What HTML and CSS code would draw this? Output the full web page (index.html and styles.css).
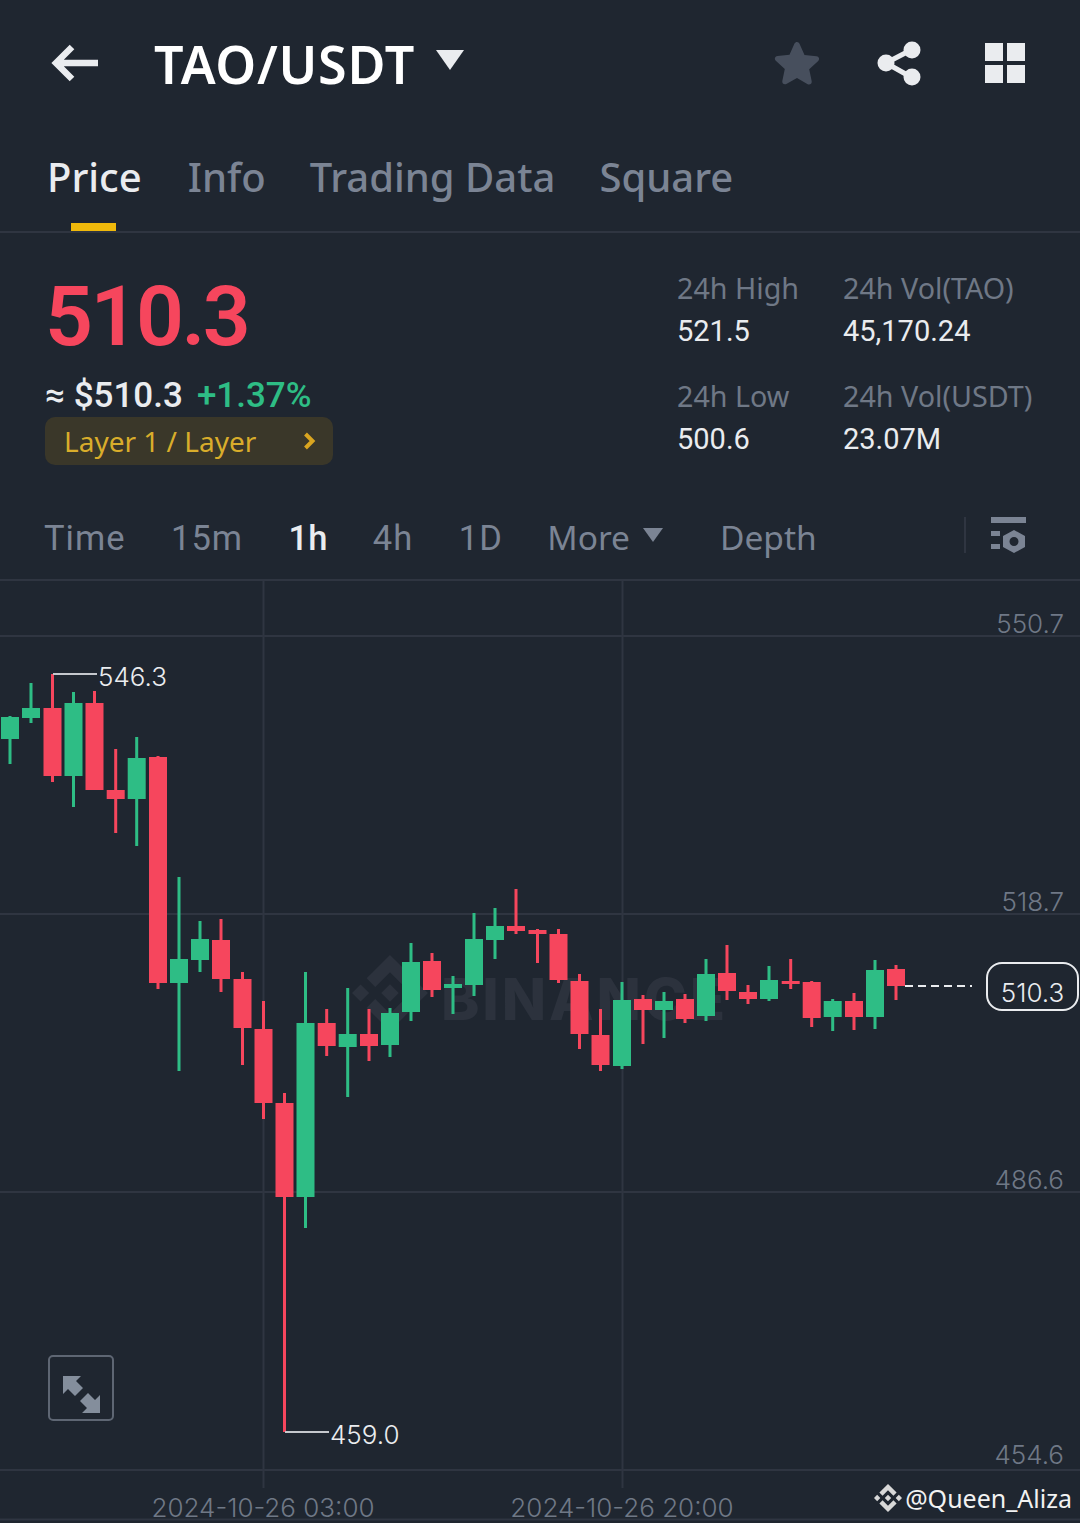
FILE: index.html
```html
<!DOCTYPE html>
<html lang="en">
<head>
  <meta charset="UTF-8" />
  <title>TAO/USDT</title>
  <link rel="stylesheet" href="styles.css">
</head>
<body>
  <header class="topbar">
    <svg class="back-icon" viewBox="0 0 50 40" width="50" height="40"><path d="M48 20H7M22 4 6 20l16 16"/></svg>
    <h1 class="pair">TAO/USDT</h1>
    <span class="caret caret-title"></span>
    <div class="topbar-actions">
      <svg class="star-icon" viewBox="0 0 46 46" width="46" height="46"><path d="M23 2c1 0 2 .7 2.500 1.800l5 11.200 12 1.300c2.500.3 3.500 3 1.700 4.700l-9 8.200 2.500 12c.5 2.500-2 4-4 3L23 38l-10.700 6c-2 1-4.500-.5-4-3l2.500-12-9-8.200c-1.800-1.700-.8-4.400 1.700-4.700l12-1.300 5-11.200C21 2.700 22 2 23 2z"/></svg>
      <svg class="share-icon" viewBox="0 0 44 46" width="44" height="46"><path d="M9 23 34 10M9 23l25 14"/><circle cx="9" cy="23" r="8.500"/><circle cx="35" cy="10" r="8.500"/><circle cx="35" cy="37" r="8.500"/></svg>
      <svg class="grid-icon" viewBox="0 0 40 40" width="40" height="40"><rect width="18" height="18"/><rect x="22" width="18" height="18"/><rect y="22" width="18" height="18"/><rect x="22" y="22" width="18" height="18"/></svg>
    </div>
  </header>

  <nav class="tabs">
    <a class="tab active">Price</a>
    <a class="tab">Info</a>
    <a class="tab">Trading Data</a>
    <a class="tab">Square</a>
  </nav>

  <section class="summary">
    <div class="summary-left">
      <div class="last-price">510.3</div>
      <div class="price-sub"><span class="fiat">≈ $510.3</span><span class="change">+1.37%</span></div>
      <div class="chip"><span>Layer 1 / Layer</span><svg viewBox="0 0 13 18" width="13" height="18"><path d="M2.500 2l7 7-7 7"/></svg></div>
    </div>
    <div class="stats">
      <div class="stat"><div class="stat-label">24h High</div><div class="stat-value">521.5</div></div>
      <div class="stat"><div class="stat-label">24h Vol(TAO)</div><div class="stat-value">45,170.24</div></div>
      <div class="stat"><div class="stat-label">24h Low</div><div class="stat-value">500.6</div></div>
      <div class="stat"><div class="stat-label">24h Vol(USDT)</div><div class="stat-value">23.07M</div></div>
    </div>
  </section>

  <div class="intervals">
    <span class="interval">Time</span>
    <span class="interval">15m</span>
    <span class="interval active">1h</span>
    <span class="interval">4h</span>
    <span class="interval">1D</span>
    <span class="interval more">More</span>
    <span class="caret caret-more"></span>
    <span class="interval depth">Depth</span>
    <span class="divider"></span>
    <svg class="settings-icon" viewBox="0 0 36 36" width="36" height="36"><path d="M1 0h35v6H1zM1 14h9v5H1zM1 27h9v5H1z"/><path fill-rule="evenodd" d="M24 13l11 6v11l-11 6-11-6V19zM24 20a4.500 4.500 0 1 0 0 9 4.500 4.500 0 0 0 0-9z"/></svg>
  </div>

  <main class="chart">
    <svg id="chart-svg" class="chart-svg" viewBox="0 581 1080 942" width="1080" height="942">
      <g class="grid">
        <path d="M0 636H1080M0 914H1080M0 1192H1080M0 1470H1080M0 1519.500H1080"/>
        <path d="M263.500 581V1488M622.500 581V1488"/>
      </g>
      <g class="watermark">
        <g transform="translate(352 955) scale(.6)">
          <path d="M38.730 53.200 63.310 28.620 87.900 53.210l14.300-14.300L63.310 0 24.420 38.900zM0 63.310 14.300 49l14.300 14.310-14.300 14.300zM38.730 73.410l24.580 24.580L87.900 73.400l14.310 14.290-38.900 38.920-38.890-38.900zM98 63.310 112.300 49l14.310 14.310-14.310 14.300zM77.820 63.300 63.310 48.790 48.800 63.310l14.510 14.500z"/>
        </g>
        <text x="441" y="1020" textLength="284">BINANCE</text>
      </g>
      <g id="candles"></g>
      <g class="axis-labels">
        <text x="1064" y="633">550.7</text>
        <text x="1064" y="911">518.7</text>
        <text x="1064" y="1189">486.6</text>
        <text x="1064" y="1464">454.6</text>
      </g>
      <g class="date-labels">
        <text x="263" y="1517">2024-10-26 03:00</text>
        <text x="622" y="1517">2024-10-26 20:00</text>
      </g>
      <path class="pin-line" d="M53 674H97M285 1432H329"/>
      <text class="pin-label" x="98" y="686">546.3</text>
      <text class="pin-label" x="330" y="1444">459.0</text>
      <path class="last-line" d="M905 986H972"/>
    </svg>

    <div class="price-tag">510.3</div>

    <button class="expand">
      <svg viewBox="0 0 38 38" width="38" height="38"><path d="M0 0h18l-5 5 7 7-8 8-7-7-5 5zM37 37H19l5-5-7-7 8-8 7 7 5-5z"/></svg>
    </button>

    <div class="credit">
      <svg viewBox="0 0 126.610 126.610" width="28" height="28"><path d="M38.730 53.200 63.310 28.620 87.900 53.210l14.300-14.300L63.310 0 24.420 38.900zM0 63.310 14.300 49l14.300 14.310-14.300 14.300zM38.730 73.410l24.580 24.580L87.900 73.400l14.310 14.290-38.900 38.920-38.890-38.900zM98 63.310 112.300 49l14.310 14.310-14.310 14.300zM77.820 63.300 63.310 48.790 48.800 63.310l14.510 14.500z"/></svg>
      <span>@Queen_Aliza</span>
    </div>
  </main>

  <script>
    // x, body top, body bottom, wick top, wick bottom, up?
    const candles = [
      [10, 717, 739, 716, 764, 1], [31, 708, 718, 683, 723, 1], [52.5, 708, 776, 674, 782, 0],
      [73.5, 703, 776, 692, 807, 1], [94.5, 703, 790, 691, 790, 0], [115.7, 790, 799, 749, 833, 0],
      [136.7, 758, 799, 737, 846, 1], [158, 757, 983, 756, 989, 0], [179, 959, 983, 877, 1071, 1],
      [200, 939, 960, 921, 972, 1], [221, 940, 979, 919, 992, 0], [242.5, 979, 1028, 972, 1065, 0],
      [263.5, 1029, 1103, 1001, 1119, 0], [284.5, 1103, 1197, 1093, 1432, 0], [305.5, 1023, 1197, 972, 1228, 1],
      [326.7, 1023, 1046, 1009, 1056, 0], [347.7, 1034, 1047, 988, 1097, 1], [369, 1034, 1046, 1009, 1061, 0],
      [390, 1013, 1045, 1008, 1057, 1], [411, 962, 1012, 943, 1021, 1], [432, 961, 990, 953, 997, 0],
      [453, 984, 988, 976, 1014, 1], [474, 939, 985, 913, 996, 1], [495, 926, 940, 908, 959, 1],
      [516, 926, 931, 889, 934, 0], [537.5, 930, 934, 929, 963, 0], [558.5, 934, 980, 929, 983, 0],
      [579.5, 981, 1034, 974, 1049, 0], [600.5, 1035, 1065, 1009, 1071, 0], [622, 1000, 1066, 982, 1069, 1],
      [643, 999, 1010, 995, 1044, 0], [664, 1001, 1010, 992, 1038, 1], [685, 999, 1019, 994, 1023, 0],
      [706, 974, 1016, 959, 1021, 1], [727, 973, 991, 945, 1000, 0], [748, 992, 999, 985, 1004, 0],
      [769, 980, 999, 966, 1001, 1], [790.7, 981, 984, 959, 989, 0], [811.7, 982, 1018, 981, 1027, 0],
      [832.7, 1001, 1017, 999, 1031, 1], [854, 1001, 1017, 993, 1030, 0], [875, 970, 1017, 960, 1029, 1],
      [896, 969, 986, 965, 1000, 0]
    ];

    const holder = document.getElementById('candles');
    holder.innerHTML = candles.map(([x, top, bottom, high, low, up]) => {
      const cls = up ? 'up' : 'down';
      return `<g class="${cls}"><rect x="${x - 1.5}" y="${high}" width="3" height="${low - high}"/>` +
        `<rect x="${x - 9}" y="${top}" width="18" height="${bottom - top}"/></g>`;
    }).join('');
  </script>
</body>
</html>
```

FILE: styles.css
```css
* {
  box-sizing: border-box;
}
body {
  margin: 0;
  width: 1080px;
  height: 1523px;
  overflow: hidden;
  background: #1f2630;
  color: #eaecef;
  font-family: 'Noto Sans', sans-serif;
}

/* top bar */
.topbar {
  display: flex;
  align-items: center;
  height: 130px;
  padding: 0 55px 4px 50px;
}
.back-icon path {
  fill: none;
  stroke: #eaecef;
  stroke-width: 6.500;
}
.pair {
  margin: 0 0 0 54px;
  font-size: 52px;
  font-weight: 600;
  letter-spacing: .75px;
  color: #fff;
}
.caret {
  width: 0;
  height: 0;
  border-style: solid;
  border-color: #eaecef transparent transparent;
}
.caret-title {
  border-width: 20px 14px 0;
  margin: -6px 0 0 21px;
}
.topbar-actions {
  display: flex;
  align-items: center;
  margin-left: auto;
}
.star-icon path {
  fill: #474f5d;
}
.share-icon {
  margin: 0 64px 0 57px;
}
.share-icon path {
  fill: none;
  stroke: #eaecef;
  stroke-width: 5;
}
.share-icon circle,
.grid-icon rect {
  fill: #eaecef;
}

/* tabs */
.tabs {
  display: flex;
  gap: 44px;
  height: 103px;
  padding: 20px 0 0 47px;
  border-bottom: 2px solid #2f3541;
}
.tab {
  position: relative;
  height: 81px;
  font-size: 40px;
  line-height: 54px;
  font-weight: 500;
  color: #7b8494;
}
.tab.active {
  margin-right: 2px;
  color: #eaecef;
}
.tab.active::after {
  content: '';
  position: absolute;
  left: 24px;
  bottom: 0;
  width: 45px;
  height: 8px;
  background: #f0b90b;
}

/* price summary */
.summary {
  display: flex;
  justify-content: space-between;
  height: 248px;
}
.summary-left {
  padding: 34px 0 0 45px;
}
.last-price {
  font-family: Roboto, sans-serif;
  font-size: 84px;
  line-height: 100px;
  font-weight: 600;
  letter-spacing: -2.500px;
  color: #f6465d;
}
.price-sub {
  display: flex;
  gap: 14px;
  margin-top: 9px;
  font-family: Roboto, sans-serif;
  font-size: 35px;
  line-height: 40px;
  font-weight: 500;
}
.change {
  color: #2ebd85;
}
.chip {
  display: flex;
  align-items: center;
  justify-content: space-between;
  width: 288px;
  height: 48px;
  margin-top: 1px;
  padding: 0 17px 0 19px;
  border-radius: 10px;
  background: #3a3729;
  color: #d9ad2b;
  font-size: 28px;
}
.chip path {
  fill: none;
  stroke: #d9a520;
  stroke-width: 4;
}
.stats {
  display: grid;
  grid-template-columns: 166px 236px;
  grid-auto-rows: 108px;
  padding-top: 35px;
  margin-right: 1px;
}
.stat-label {
  font-size: 28.700px;
  line-height: 40px;
  color: #6f7886;
}
.stat-value {
  margin-top: 3px;
  font-family: Roboto, sans-serif;
  font-size: 29px;
  line-height: 40px;
  color: #eaecef;
}

/* interval row */
.intervals {
  display: flex;
  align-items: center;
  gap: 45.500px;
  height: 100px;
  padding: 16px 54px 0 44px;
  border-bottom: 2px solid #2f3541;
}
.interval {
  font-family: Roboto, sans-serif;
  font-size: 34.500px;
  letter-spacing: 1px;
  color: #7b8494;
}
.interval.active {
  font-weight: 500;
  letter-spacing: 0;
  color: #eaecef;
}
.interval.more,
.interval.depth {
  margin-top: -2px;
  font-family: 'Noto Sans', sans-serif;
  font-size: 33.500px;
  letter-spacing: 0;
}
.interval.more {
  margin-left: -1px;
}
.caret-more {
  border-width: 14px 10px 0;
  border-top-color: #7b8494;
  margin: -6px 0 0 -33px;
}
.interval.depth {
  margin-left: 12px;
}
.divider {
  width: 2px;
  height: 36px;
  margin: -6px 0 0 auto;
  background: #2f3541;
}
.settings-icon {
  margin: -6px 0 0 -21px;
  fill: #7b8494;
}

/* chart */
.chart {
  position: relative;
  height: 942px;
}
.chart-svg {
  display: block;
  font-family: Inter, sans-serif;
  font-weight: 300;
}
.grid path {
  fill: none;
  stroke: #2f3541;
  stroke-width: 2;
}
.watermark {
  fill: #2c323d;
}
.watermark text {
  font-size: 58px;
  font-weight: 800;
}
.up rect {
  fill: #2ebd85;
}
.down rect {
  fill: #f6465d;
}
.axis-labels text {
  font-size: 26px;
  text-anchor: end;
  fill: #6f7886;
}
.date-labels text {
  font-size: 26px;
  text-anchor: middle;
  fill: #6f7886;
}
.pin-line {
  fill: none;
  stroke: #c5c8cd;
  stroke-width: 2;
}
.pin-label {
  font-size: 26px;
  fill: #eaecef;
}
.last-line {
  fill: none;
  stroke: #eaecef;
  stroke-width: 2;
  stroke-dasharray: 8 5;
}
.price-tag {
  position: absolute;
  left: 986px;
  top: 381px;
  width: 93px;
  height: 49px;
  padding-top: 13px;
  border: 2px solid #eaecef;
  border-radius: 16px;
  font-family: Inter, sans-serif;
  font-size: 26px;
  font-weight: 300;
  line-height: 32px;
  text-align: center;
}
.expand {
  position: absolute;
  left: 48px;
  top: 774px;
  width: 66px;
  height: 66px;
  padding: 0;
  border: 2px solid #5e6673;
  border-radius: 5px;
  background: transparent;
}
.expand svg {
  display: block;
  margin: 13px 0 0 13px;
  fill: #848e9c;
}
.credit {
  position: absolute;
  right: 8px;
  bottom: 7px;
  display: flex;
  align-items: center;
  gap: 3px;
  font-size: 25px;
  line-height: 36px;
  color: #f2f2f2;
}
.credit svg {
  fill: #d8d8d8;
}
```
